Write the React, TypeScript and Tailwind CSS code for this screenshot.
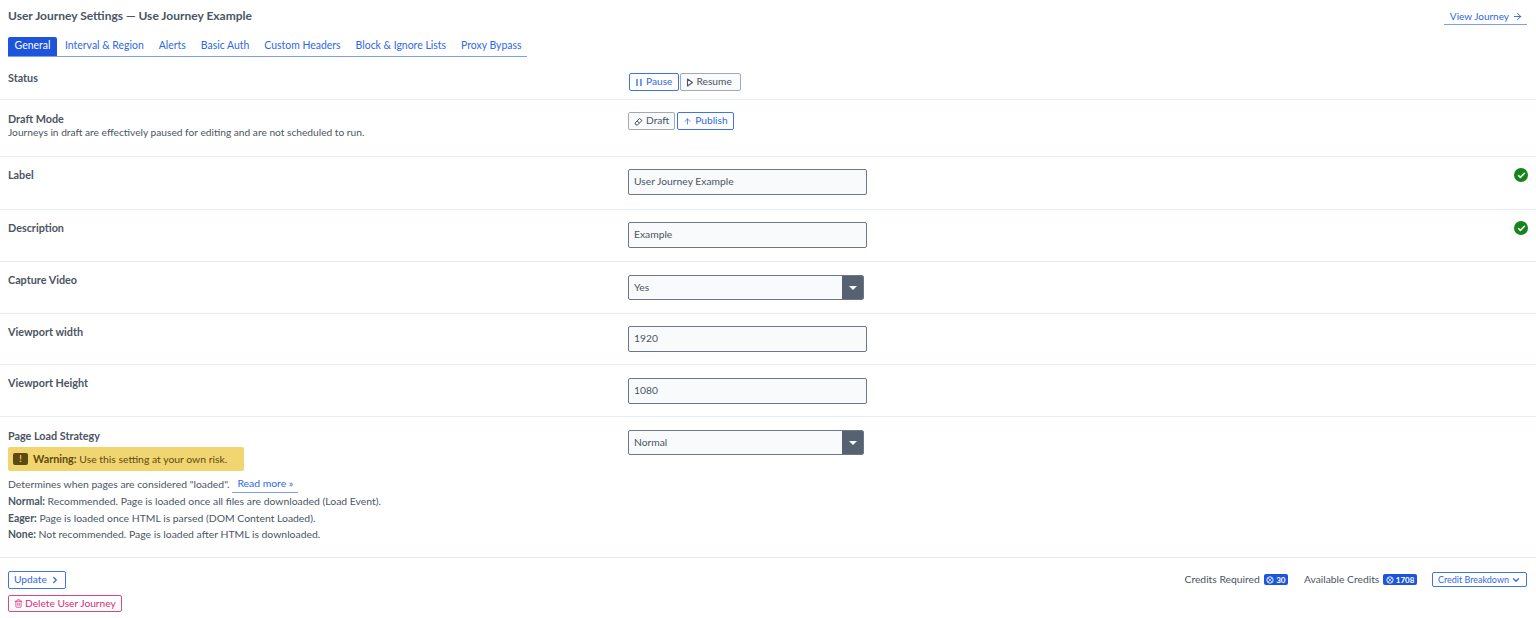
import React from "react";
import { ArrowRight, ArrowUp, Check, ChevronDown, ChevronRight, Trash2 } from "lucide-react";

const tabs = ["Interval & Region", "Alerts", "Basic Auth", "Custom Headers", "Block & Ignore Lists", "Proxy Bypass"];

function Ok() {
  return (
    <span className="flex h-[14px] w-[14px] items-center justify-center rounded-full bg-[#15851b] text-white">
      <Check size={9} strokeWidth={4} />
    </span>
  );
}

function Row({ label, h, ok, top, labelTop, children }: { label: string; h: string; ok?: boolean; top?: string; labelTop?: string; children: React.ReactNode }) {
  return (
    <div className={`flex border-b border-[#e4ecf8] pl-2 pr-[8px] ${h}`}>
      <div className={`w-[620px] ${labelTop ?? "pt-[11px]"} text-[10.8px] leading-[14px] font-bold text-[#4b5563]`}>{label}</div>
      <div className={`flex-1 ${top ?? "pt-3"}`}>{children}</div>
      {ok && <div className="pt-[11px]"><Ok /></div>}
    </div>
  );
}

function Field({ value }: { value: string }) {
  return (
    <div className="flex h-[26px] w-[239px] items-center rounded-[2px] border border-[#6f7787] bg-[#f8fafc] px-[5px] text-[10.3px] text-[#4b5563]">
      {value}
    </div>
  );
}

function Select({ value }: { value: string }) {
  return (
    <div className="flex h-[25px] w-[236px] items-center overflow-hidden rounded-[2px] border border-[#6f7787] bg-[#f8fafc] text-[10.3px] text-[#4b5563]">
      <span className="flex-1 pl-[5px]">{value}</span>
      <span className="flex h-full w-[21px] items-center justify-center bg-[#566172]">
        <span className="h-0 w-0 border-x-[4px] border-t-[4px] border-x-transparent border-t-white" />
      </span>
    </div>
  );
}

function Btn({ blue, children }: { blue?: boolean; children: React.ReactNode }) {
  return (
    <span
      className={`flex h-[18px] items-center gap-[3px] rounded-[2px] border px-[5px] text-[10.2px] ${
        blue ? "border-[#3b74ec] bg-white text-[#2f68e6]" : "border-[#a3a9b4] bg-[#f9fafb] text-[#4b5563]"
      }`}
    >
      {children}
    </span>
  );
}

function PauseIcon() {
  return (
    <svg width="8" height="9" viewBox="0 0 8 9" fill="none" stroke="currentColor" strokeWidth="1.3">
      <path d="M2 1v7M6 1v7" />
    </svg>
  );
}

function PlayIcon() {
  return (
    <svg width="8" height="9" viewBox="0 0 8 9" fill="none" stroke="currentColor" strokeWidth="1.1" strokeLinejoin="round">
      <path d="M1.5 1v7l5-3.5z" />
    </svg>
  );
}

function EraserIcon() {
  return (
    <svg width="9" height="9" viewBox="0 0 9 9" fill="none" stroke="currentColor" strokeWidth="1" strokeLinejoin="round">
      <path d="M1 6l4.5-4.5 2.5 2L3.5 8H2z" />
      <path d="M3 4l2.5 2" />
    </svg>
  );
}

function CreditIcon() {
  return (
    <svg width="8" height="8" viewBox="0 0 8 8" fill="none" stroke="currentColor" strokeWidth="0.9">
      <circle cx="4" cy="4" r="3.2" />
      <path d="M2 2l4 4M6 2L2 6" strokeWidth="0.7" />
    </svg>
  );
}

function Credit({ n }: { n: string }) {
  return (
    <span className="ml-1 flex h-[11px] items-center gap-[2px] rounded-[2px] bg-[#1d54dc] px-[2.5px] text-[8px] font-bold text-white">
      <CreditIcon />
      {n}
    </span>
  );
}

export default function App() {
  return (
    <div className="h-[618px] overflow-hidden bg-white font-['Lato','Noto_Sans',sans-serif] text-[#4b5563]">
      <div className="flex items-start justify-between pl-2 pr-[9px] pt-[8px]">
        <h1 className="text-[12px] leading-[15px] font-bold text-[#4b5563]">User Journey Settings — Use Journey Example</h1>
        <a className="mt-px flex items-center gap-[3px] border-b-[1.5px] border-[#7d9ff0] pl-[6px] pr-[4px] pb-px text-[10px] leading-[14px] text-[#2f68e6]">
          View Journey <ArrowRight size={11} />
        </a>
      </div>
      <div className="mx-2 mt-[12px] flex h-[20px] w-[519px] items-stretch gap-[15px] border-b-[1.5px] border-[#7d9ff0] text-[10.45px] text-[#2f68e6]">
        <span className="-mr-[7px] flex w-[49px] items-center justify-center rounded-t-[2px] bg-[#1d54dc] pb-px text-white">General</span>
        {tabs.map((t) => (
          <span key={t} className="flex items-center pb-px">{t}</span>
        ))}
      </div>

      <Row label="Status" h="h-[43px]" top="pt-[16px]" labelTop="pt-[14px]">
        <div className="ml-px flex gap-px">
          <Btn blue><PauseIcon />Pause</Btn>
          <span className="flex w-[61px] flex-col"><Btn><PlayIcon />Resume</Btn></span>
        </div>
      </Row>

      <div className="flex h-[57px] border-b border-[#e4ecf8] pl-2">
        <div className="w-[620px] pt-[12px] leading-[13px]">
          <div className="text-[10.8px] font-bold text-[#4b5563]">Draft Mode</div>
          <div className="mt-px text-[10.2px] text-[#4b5563]">Journeys in draft are effectively paused for editing and are not scheduled to run.</div>
        </div>
        <div className="flex gap-[2px] pt-3">
          <Btn><EraserIcon />Draft</Btn>
          <Btn blue><ArrowUp size={9} />Publish</Btn>
        </div>
      </div>

      <Row label="Label" h="h-[53px]" ok><Field value="User Journey Example" /></Row>
      <Row label="Description" h="h-[52px]" ok><Field value="Example" /></Row>
      <Row label="Capture Video" h="h-[52px]" top="pt-[13px]"><Select value="Yes" /></Row>
      <Row label="Viewport width" h="h-[51px]"><Field value="1920" /></Row>
      <Row label="Viewport Height" h="h-[52px]" top="pt-[13px]"><Field value="1080" /></Row>

      <div className="flex h-[141px] border-b border-[#e4ecf8] pl-2">
        <div className="w-[620px] pt-[12px] text-[10.4px]">
          <div className="text-[10.8px] leading-[14px] font-bold">Page Load Strategy</div>
          <div className="mt-[4px] flex h-[24px] w-[236px] items-center gap-[5px] rounded-[2px] bg-[#f1d570] pl-[5px] text-[#5c4a12]">
            <span className="flex h-[12px] w-[15px] items-center justify-center rounded-[2px] bg-[#5c4a12] text-[9px] font-bold text-[#f1d570]">!</span>
            <span><b className="text-[10.8px]">Warning:</b> Use this setting at your own risk.</span>
          </div>
          <div className="mt-[5px] flex h-[17px] items-center">
            Determines when pages are considered "loaded".
            <a className="ml-[3px] border-b-[1.5px] border-[#7d9ff0] px-[5px] pb-[1px] text-[#2f68e6]">Read more »</a>
          </div>
          <div className="leading-[16.6px]"><b>Normal:</b> Recommended. Page is loaded once all files are downloaded (Load Event).</div>
          <div className="leading-[16.6px]"><b>Eager:</b> Page is loaded once HTML is parsed (DOM Content Loaded).</div>
          <div className="leading-[16.6px]"><b>None:</b> Not recommended. Page is loaded after HTML is downloaded.</div>
        </div>
        <div className="pt-[13px]"><Select value="Normal" /></div>
      </div>

      <div className="flex items-start justify-between pl-2 pr-[9px] pt-[13px]">
        <div className="flex flex-col items-start gap-[6px]">
          <Btn blue>Update <ChevronRight size={10} strokeWidth={3} /></Btn>
          <span className="flex h-[17px] items-center gap-[2px] rounded-[2px] border border-[#e0457f] bg-white px-[5px] text-[10.2px] text-[#db2777]">
            <Trash2 size={9} />Delete User Journey
          </span>
        </div>
        <div className="mt-px flex items-center text-[10.3px]">
          <span>Credits Required</span>
          <Credit n="30" />
          <span className="ml-4">Available Credits</span>
          <Credit n="1708" />
          <span className="ml-[15px] flex h-[15px] items-center gap-[2px] rounded-[2px] border border-[#3b74ec] px-[5px] text-[9px] text-[#2f68e6]">Credit Breakdown <ChevronDown size={10} strokeWidth={3} /></span>
        </div>
      </div>
    </div>
  );
}
